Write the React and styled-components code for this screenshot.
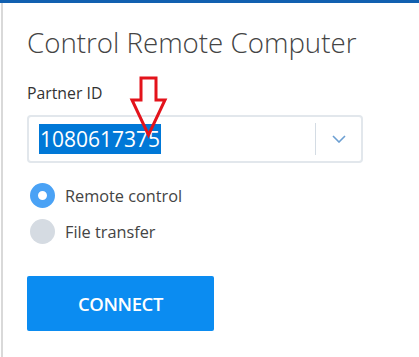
import styled, { createGlobalStyle } from "styled-components";

const GlobalStyle = createGlobalStyle`
  html, body {
    margin: 0;
    padding: 0;
    background: #ffffff;
  }
  body {
    font-family: "Open Sans", "Noto Sans", "Liberation Sans", sans-serif;
  }
`;

const Page = styled.div`
  min-height: 100vh;
  box-sizing: border-box;
  border-top: 3px solid #1160b0;
`;

const Panel = styled.div`
  min-height: calc(100vh - 3px);
  box-sizing: border-box;
  margin-left: 1px;
  border-left: 2px solid #d9d9d9;
  padding: 19px 0 0 24px;
`;

const Title = styled.h1`
  margin: 0;
  font-size: 27.7px;
  font-weight: 300;
  color: #444;
  line-height: 40px;
`;

const Label = styled.div`
  margin-top: 20px;
  font-size: 15.8px;
  color: #333;
  line-height: 22px;
`;

const Field = styled.div`
  position: relative;
  margin-top: 11px;
  width: 336px;
  height: 48px;
  box-sizing: border-box;
  border: 2px solid #e2e7ec;
  border-radius: 4px;
  display: flex;
  align-items: center;
`;

const Value = styled.div`
  flex: 1;
  padding-left: 10px;
  display: flex;
  align-items: center;
`;

const Selected = styled.span`
  background: #0078d7;
  color: #fff;
  font-size: 21px;
  line-height: 30px;
  padding: 0 1px;
`;

const Divider = styled.div`
  width: 1px;
  align-self: stretch;
  margin: 6px 0;
  background: #d4dce4;
`;

const Toggle = styled.div`
  width: 45px;
  display: flex;
  justify-content: center;
  align-items: center;
`;

const Arrow = styled.svg`
  position: absolute;
  left: 101px;
  top: -41px;
  overflow: visible;
`;

const RadioGroup = styled.div`
  margin-top: 20px;
  display: flex;
  flex-direction: column;
  gap: 11px;
`;

const RadioRow = styled.label`
  display: flex;
  align-items: center;
  gap: 10px;
  font-size: 16.3px;
  color: #444;
  padding-left: 3px;
`;

const RadioDot = styled.span`
  width: 25px;
  height: 25px;
  border-radius: 50%;
  box-sizing: border-box;
  background: ${(p) => (p.$checked ? "#fff" : "#d5dbe2")};
  border: ${(p) => (p.$checked ? "8px solid #4aa2f5" : "none")};
`;

const Button = styled.button`
  margin-top: 32px;
  width: 187px;
  height: 55px;
  border: none;
  border-radius: 2px;
  background: #0b8cf1;
  color: #fff;
  font-family: "Open Sans", "Noto Sans", sans-serif;
  font-size: 18.5px;
  font-weight: 600;
  letter-spacing: -0.4px;
  cursor: pointer;
`;

export default function App() {
  return (
    <Page>
      <GlobalStyle />
      <Panel>
        <Title>Control Remote Computer</Title>
        <Label>Partner ID</Label>
        <Field>
          <Value>
            <Selected>1080617375</Selected>
          </Value>
          <Divider />
          <Toggle>
            <svg width="14" height="8" viewBox="0 0 14 8">
              <path d="M1 1 L7 7 L13 1" fill="none" stroke="#6c9fd2" strokeWidth="1.6" />
            </svg>
          </Toggle>
          <Arrow width="37" height="61" viewBox="0 0 37 61">
            <path
              d="M11 2 H26 V24 H35 L18.5 59 L2 24 H11 Z"
              fill="none"
              stroke="#e3131b"
              strokeWidth="3"
              strokeLinejoin="miter"
            />
          </Arrow>
        </Field>
        <RadioGroup>
          <RadioRow>
            <RadioDot $checked />
            Remote control
          </RadioRow>
          <RadioRow>
            <RadioDot />
            File transfer
          </RadioRow>
        </RadioGroup>
        <Button>CONNECT</Button>
      </Panel>
    </Page>
  );
}
